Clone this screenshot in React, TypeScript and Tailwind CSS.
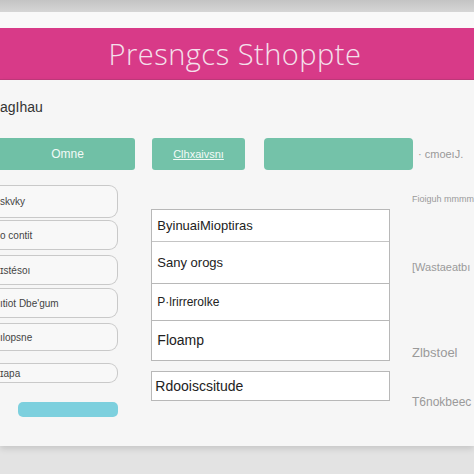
export default function App() {
  const inputs = [
    { label: "skvky", h: "h-[33px]", mt: "mt-0" },
    { label: "o contit", h: "h-[30px]", mt: "mt-[2px]" },
    { label: "ɪstésoı", h: "h-[30px]", mt: "mt-[5px]" },
    { label: "ıtiot Dbe'gum", h: "h-[30px]", mt: "mt-[3px]" },
    { label: "ılopsne", h: "h-[28px]", mt: "mt-[5px]" },
    { label: "ɪapa", h: "h-[20px]", mt: "mt-[12px]" },
  ];

  return (
    <div className="w-[474px] h-[474px] overflow-hidden bg-[#e3e3e3] font-['Open_Sans',sans-serif]">
      <div className="h-[12px] bg-gradient-to-b from-[#c4c4c4] to-[#d6d6d6]" />
      <div className="h-[16px] bg-[#f9f9f9]" />
      {/* Header */}
      <header className="h-[52px] bg-[#d83a88] flex items-center justify-center border-b border-[#c0397b]">
        <h1 className="text-[29px] font-light tracking-[0.5px] text-[#f4e1ec] pr-[4px]">Presngcs Sthoppte</h1>
      </header>

      <main className="h-[366px] bg-[#f6f6f6] shadow-[0_3px_6px_rgba(0,0,0,0.12)] flex flex-col">
        <p className="mt-[20px] text-[14px] text-[#333] font-['Liberation_Sans',sans-serif] leading-none">agIhau</p>

        {/* Tabs */}
        <div className="mt-[24px] flex items-center h-[32px]">
          <button className="w-[135px] h-[32px] rounded-r-[3px] bg-[#70c0a6] text-[12px] text-[#f2faf7] font-['Liberation_Sans',sans-serif]">Omne</button>
          <button className="ml-[17px] w-[93px] h-[32px] rounded-[3px] bg-[#73c2a9] text-[11px] text-[#f2faf7] underline font-['Liberation_Sans',sans-serif]">Clhxaivsnı</button>
          <button className="ml-[19px] w-[149px] h-[32px] rounded-[4px] bg-[#74c2a9]" />
          <span className="ml-[5px] text-[11px] text-[#999] font-['Liberation_Sans',sans-serif]">· cmoeıJ.</span>
        </div>

        <div className="mt-[15px] flex">
          {/* Left inputs */}
          <div className="w-[119px] flex flex-col">
            {inputs.map((it) => (
              <div
                key={it.label}
                className={`${it.h} ${it.mt} rounded-r-[9px] border border-l-0 border-[#c9c9c9] bg-[#f8f8f8] flex items-center text-[10px] text-[#444] font-['Liberation_Sans',sans-serif]`}
              >
                {it.label}
              </div>
            ))}
            <div className="mt-[19px] ml-[18px] h-[15px] rounded-[5px] bg-[#7dd0de]" />
          </div>

          {/* Middle table */}
          <div className="ml-[33px] w-[240px] pt-[24px] flex flex-col font-['Liberation_Sans',sans-serif] text-[#222]">
            <div className="border border-[#b8b8b8] bg-white">
              <div className="h-[32px] flex items-center px-[5px] text-[13px] border-b border-[#c4c4c4]">ByinuaiMioptiras</div>
              <div className="h-[42px] flex items-center px-[5px] text-[13px] border-b border-[#b8b8b8]">Sany orogs</div>
              <div className="h-[37px] flex items-center px-[5px] text-[12px] border-b border-[#b8b8b8]">P·lrirrerolke</div>
              <div className="h-[39px] flex items-center px-[5px] text-[14px]">Floamp</div>
            </div>
            <div className="mt-[10px] h-[30px] border border-[#b8b8b8] bg-white flex items-center px-[3px] text-[14px]">Rdooiscsitude</div>
          </div>

          {/* Right labels */}
          <div className="ml-[22px] flex flex-col font-['Liberation_Sans',sans-serif] text-[#9a9a9a] whitespace-nowrap">
            <span className="mt-[8px] text-[9px]">Fioiguh mmmm</span>
            <span className="mt-[52px] text-[11px]">[Wastaeatbı</span>
            <span className="mt-[68px] text-[13px]">Zlbstoel</span>
            <span className="mt-[30px] text-[12px]">T6nokbeec</span>
          </div>
        </div>
      </main>
    </div>
  );
}
